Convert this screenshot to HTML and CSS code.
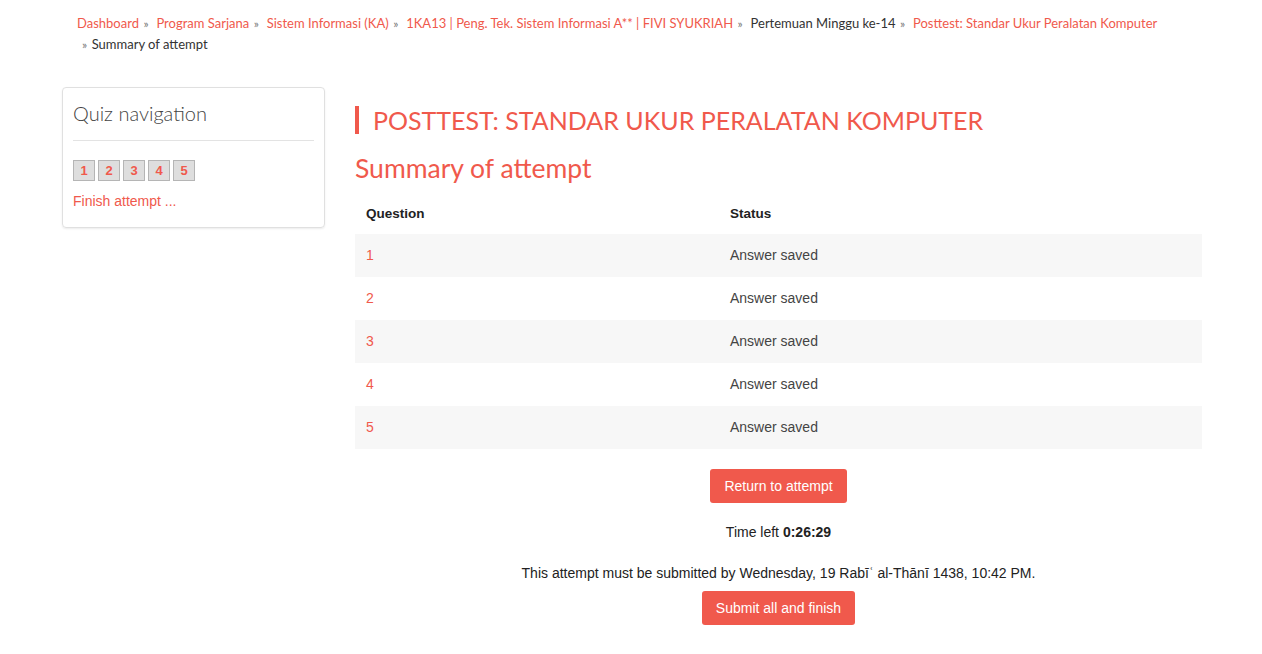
FILE: index.html
```html
<!DOCTYPE html>
<html>
<head>
<meta charset="utf-8">
<link rel="stylesheet" href="styles.css">
</head>
<body>
<nav class="breadcrumb">
  <a href="#">Dashboard</a><span class="sep">»</span>
  <a href="#">Program Sarjana</a><span class="sep">»</span>
  <a href="#">Sistem Informasi (KA)</a><span class="sep">»</span>
  <a href="#">1KA13 | Peng. Tek. Sistem Informasi A** | FIVI SYUKRIAH</a><span class="sep">»</span>
  <span class="plain">Pertemuan Minggu ke-14</span><span class="sep">»</span>
  <a href="#">Posttest: Standar Ukur Peralatan Komputer</a><br>
  <span class="sep first">»</span><span class="plain">Summary of attempt</span>
</nav>
<div class="page">
  <aside class="block">
    <h2 class="block-title">Quiz navigation</h2>
    <div class="qnbuttons">
      <a class="qnbutton" href="#">1</a>
      <a class="qnbutton" href="#">2</a>
      <a class="qnbutton" href="#">3</a>
      <a class="qnbutton" href="#">4</a>
      <a class="qnbutton" href="#">5</a>
    </div>
    <a class="finish" href="#">Finish attempt ...</a>
  </aside>
  <main class="main">
    <h1 class="title">POSTTEST: STANDAR UKUR PERALATAN KOMPUTER</h1>
    <h2 class="subtitle">Summary of attempt</h2>
    <table class="summary">
      <thead>
        <tr><th class="c0">Question</th><th class="c1">Status</th></tr>
      </thead>
      <tbody>
        <tr class="odd"><td class="c0"><a href="#">1</a></td><td class="c1">Answer saved</td></tr>
        <tr><td class="c0"><a href="#">2</a></td><td class="c1">Answer saved</td></tr>
        <tr class="odd"><td class="c0"><a href="#">3</a></td><td class="c1">Answer saved</td></tr>
        <tr><td class="c0"><a href="#">4</a></td><td class="c1">Answer saved</td></tr>
        <tr class="odd"><td class="c0"><a href="#">5</a></td><td class="c1">Answer saved</td></tr>
      </tbody>
    </table>
    <div class="controls">
      <button class="btn">Return to attempt</button>
      <p class="timeleft">Time left <b>0:26:29</b></p>
      <p class="due">This attempt must be submitted by Wednesday, 19 Rabīʿ al-Thānī 1438, 10:42 PM.</p>
      <button class="btn">Submit all and finish</button>
    </div>
  </main>
</div>
</body>
</html>
```
FILE: styles.css
```css
html, body {
  margin: 0;
  padding: 0;
  background: #fff;
}
body {
  font-family: "Liberation Sans", Arial, sans-serif;
  font-size: 14px;
  color: #333;
}
a {
  color: #f0594c;
  text-decoration: none;
}
.breadcrumb {
  padding: 13px 0 0 77px;
  width: 1110px;
  font-family: "Lato", "Liberation Sans", sans-serif;
  font-size: 13px;
  line-height: 20px;
  color: #333;
}
.breadcrumb a { color: #f0594c; }
.breadcrumb .sep {
  color: #777;
  margin: 0 4.5px;
  font-size: 12px;
}
.breadcrumb .sep.first { margin-left: 5px; }
.page {
  display: flex;
  padding: 32px 60px 0 62px;
  gap: 30px;
}
.block {
  width: 241px;
  flex: none;
  align-self: flex-start;
  border: 1px solid #e0e0e0;
  border-radius: 4px;
  box-shadow: 0 1px 2px rgba(0,0,0,0.08);
  padding: 8px 10px 17px 10px;
}
.block-title {
  margin: 0;
  font-family: "Lato", "Liberation Sans", sans-serif;
  font-weight: 300;
  font-size: 20px;
  color: #444;
  line-height: 34px;
  padding-bottom: 10px;
  border-bottom: 1px solid #e3e3e3;
  margin-bottom: 19px;
}
.qnbuttons {
  display: flex;
  gap: 3px;
}
.qnbutton {
  width: 20px;
  height: 19px;
  border: 1px solid #b5b5b5;
  background: #dedede;
  color: #f0594c;
  font-weight: bold;
  font-size: 13px;
  line-height: 19px;
  text-align: center;
}
.finish {
  display: block;
  margin-top: 11px;
  font-size: 14px;
  line-height: 18px;
}
.main {
  flex: 1;
  padding-top: 19px;
}
.title {
  margin: 0;
  border-left: 4px solid #f0594c;
  padding-left: 14px;
  font-family: "Lato", "Liberation Sans", sans-serif;
  font-weight: 400;
  font-size: 25px;
  line-height: 28px;
  color: #f0594c;
}
.subtitle {
  margin: 17px 0 0 0;
  font-family: "Lato", "Liberation Sans", sans-serif;
  font-weight: 400;
  font-size: 26.5px;
  line-height: 34px;
  color: #f0594c;
}
.summary {
  width: 100%;
  border-collapse: collapse;
  margin-top: 10px;
}
.summary th {
  text-align: left;
  font-weight: bold;
  font-size: 13.5px;
  color: #222;
  padding: 10px 12px 11px 11px;
  line-height: 18px;
}
.summary th.c0 { width: 341px; }
.summary td {
  padding: 12px 11px;
  height: 19px;
  line-height: 19px;
  font-size: 14px;
}
.summary td.c1 { color: #444; }
.summary tr.odd td { background: #f7f7f7; }
.controls {
  display: flex;
  flex-direction: column;
  align-items: center;
  padding-top: 20px;
}
.btn {
  font-family: "Liberation Sans", Arial, sans-serif;
  font-size: 14px;
  color: #fff;
  background: #f0594c;
  border: none;
  border-radius: 3px;
  height: 34px;
  padding: 0 14px;
}
.timeleft {
  margin: 19px 0 0 0;
  line-height: 20px;
  color: #222;
}
.timeleft b { color: #222; }
.due {
  margin: 21px 0 0 0;
  line-height: 20px;
  color: #222;
}
.due + .btn { margin-top: 8px; }
```
